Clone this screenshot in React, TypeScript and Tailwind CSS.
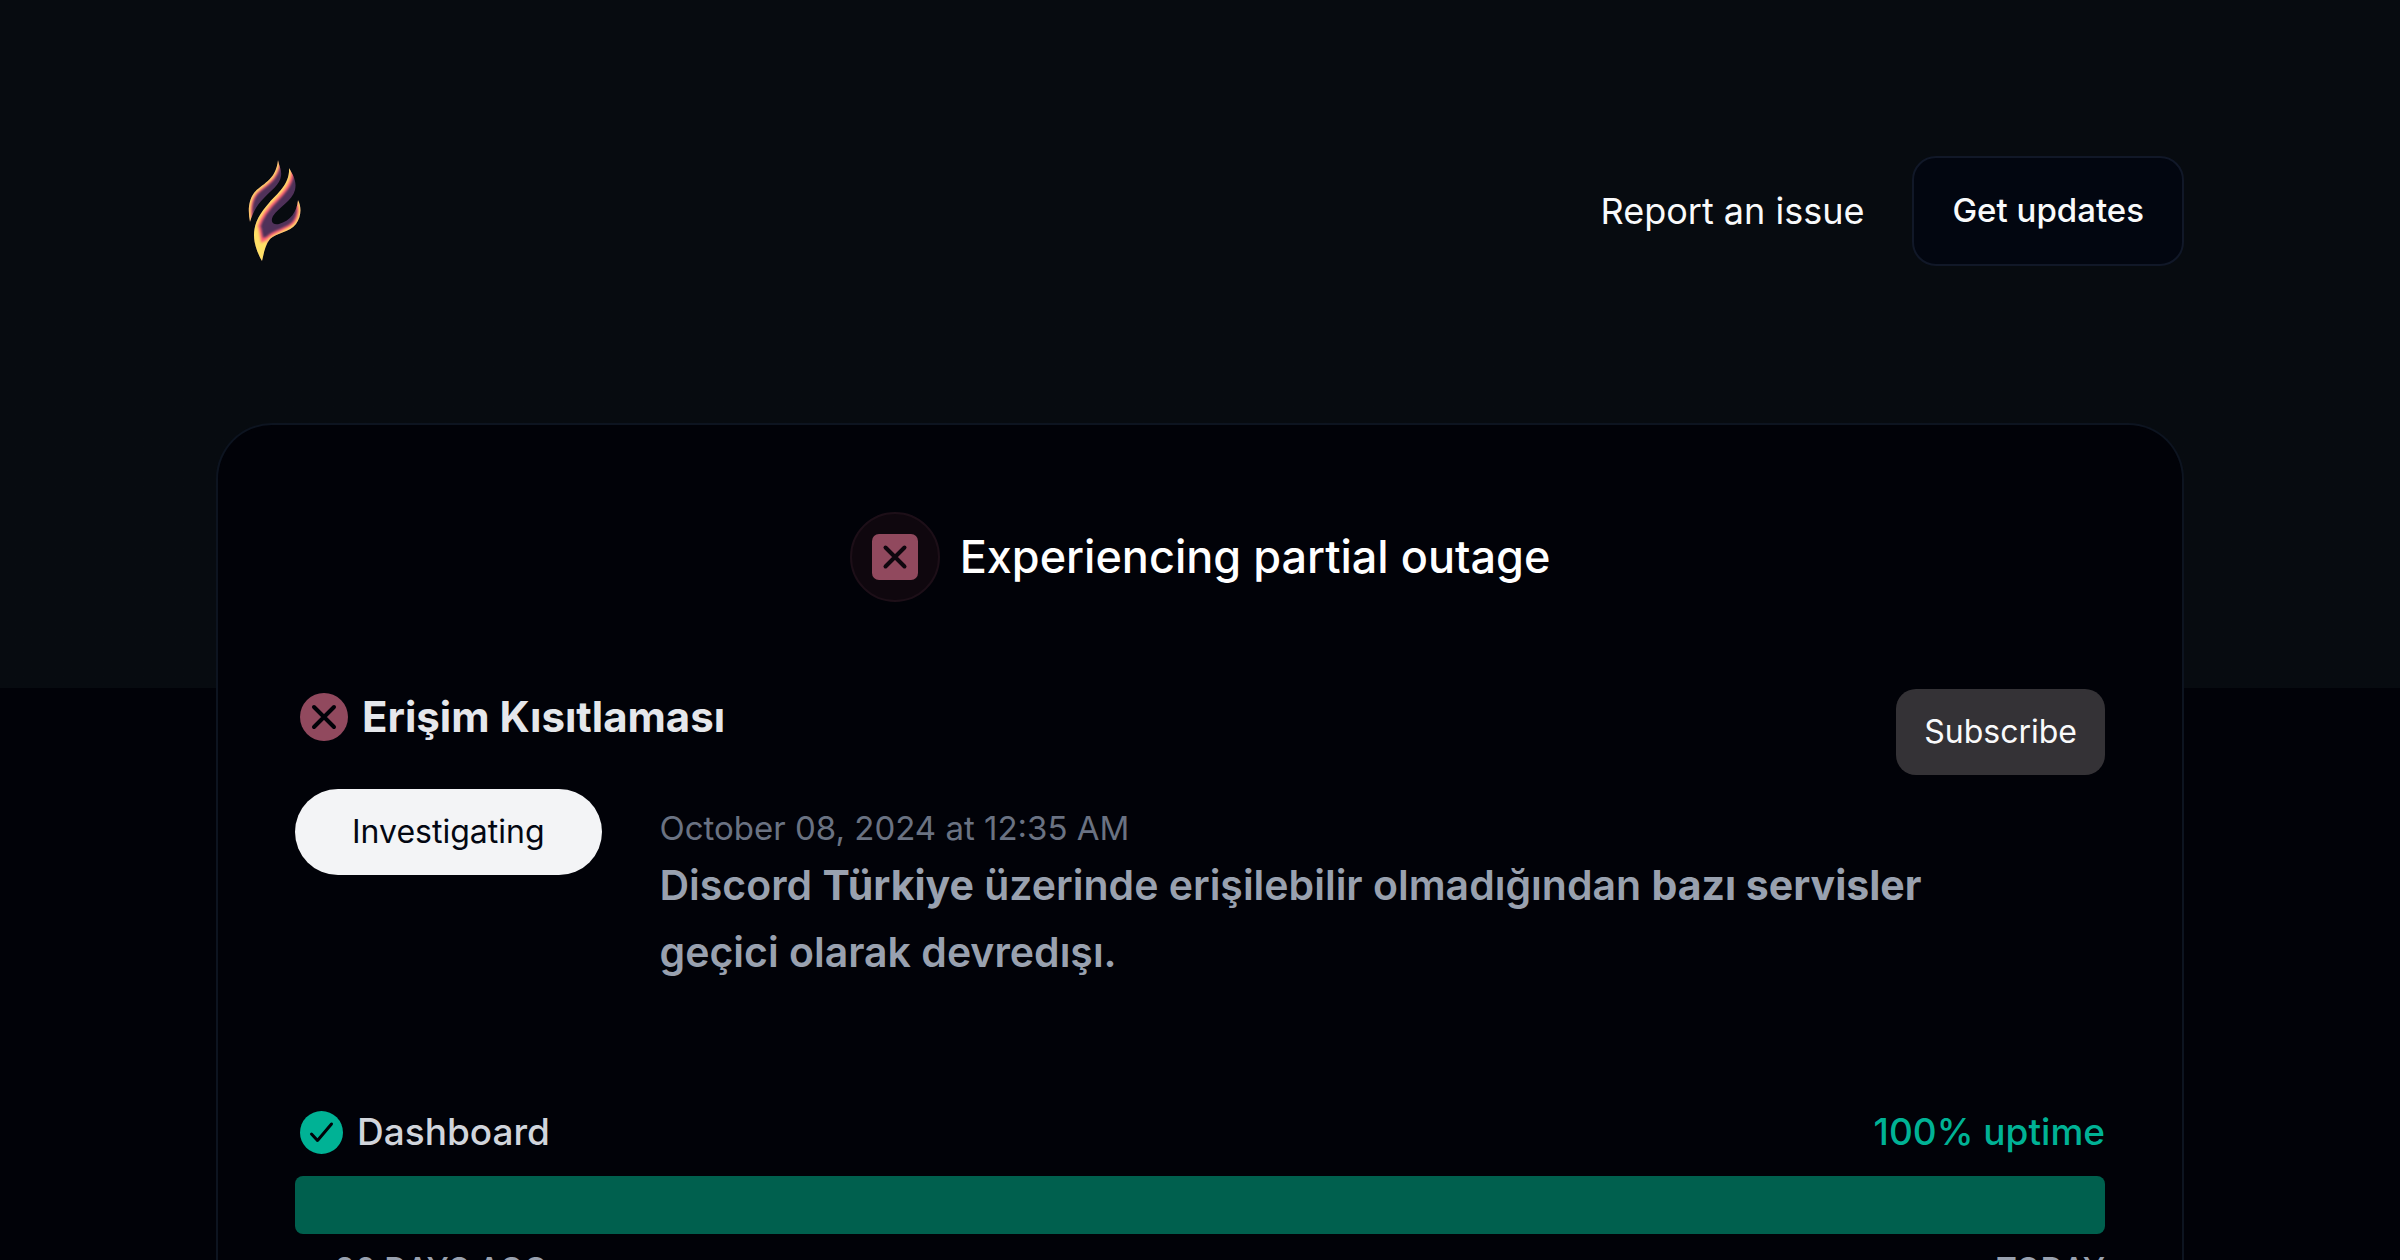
import { useId } from 'react'

function Logo() {
  const id = useId()
  return (
    <svg viewBox="0 1 90 130" className="h-[130px] w-[90px]" aria-label="Logo" role="img">
      <defs>
        <filter id={`${id}-soft`} x="-20%" y="-20%" width="140%" height="140%">
          <feGaussianBlur stdDeviation="0.8" />
        </filter>
        <clipPath id={`${id}-a`}>
          <path d="M48 15C49 21 52 25 51 31C50 40 41 45 34 53C27 60 23 67 20 77C18 67 18 56 24 48C31 39 46 36 48 15Z" />
        </clipPath>
        <clipPath id={`${id}-b`}>
          <path d="M59 23C63 30 67 36 65 45C62 56 49 62 43 71C40 77 43 80 49 79C60 76 67 67 68 55C72 63 71 72 66 79C60 87 46 88 40 94C35 100 34 108 32 116C28 109 24 100 24 90C24 77 31 67 39 58C48 48 60 39 59 23Z" />
        </clipPath>
      </defs>
      <g clipPath={`url(#${id}-a)`}>
        <rect width="90" height="130" fill="#4f3159" />
        <g fill="none" filter={`url(#${id}-soft)`}>
          <path d="M48 15C46 36 31 39 24 48C18 56 18 67 20 77" stroke="#ff6374" strokeWidth="7" />
          <path d="M48 15C46 36 31 39 24 48C18 56 18 67 20 77" stroke="#ffe066" strokeWidth="3" />
        </g>
      </g>
      <g clipPath={`url(#${id}-b)`}>
        <rect width="90" height="130" fill="#4f3159" />
        <g filter={`url(#${id}-soft)`}>
          <path d="M20 82L31 82L33 93L44 89L36 120L20 120Z" fill="#ff6374" />
          <path d="M59 23C60 39 48 48 39 58C31 67 24 77 24 90" fill="none" stroke="#ff6374" strokeWidth="10" />
          <path d="M40 94C46 88 60 87 66 79C71 72 72 63 68 55" fill="none" stroke="#ff6374" strokeWidth="8" />
          <path d="M20 82L28 82L31 98L38 95L36 120L20 120Z" fill="#ffe066" />
          <path d="M59 23C60 39 48 48 39 58C31 67 24 77 24 90" fill="none" stroke="#ffe066" strokeWidth="4" />
          <path d="M38 96C46 88 60 87 66 79C71 72 72 63 68 55" fill="none" stroke="#ffe066" strokeWidth="3" />
        </g>
      </g>
    </svg>
  )
}

function CrossCircle() {
  return (
    <svg viewBox="0 0 48 48" className="size-12 shrink-0" aria-hidden="true">
      <circle cx="24" cy="24" r="24" fill="#91495e" />
      <path d="M14 14L34 34M34 14L14 34" stroke="#010208" strokeWidth="4" strokeLinecap="round" />
    </svg>
  )
}

function CheckCircle() {
  return (
    <svg viewBox="0 0 43 43" className="size-[43px] shrink-0" aria-hidden="true">
      <circle cx="21.5" cy="21.5" r="21.5" fill="#00b295" />
      <path d="M11.5 23L17.5 29.5L31.5 13" fill="none" stroke="#010208" strokeWidth="3" strokeLinecap="round" strokeLinejoin="round" />
    </svg>
  )
}

function CrossBadge() {
  return (
    <div className="flex size-[90px] items-center justify-center rounded-full border-2 border-[#1d0f18] bg-[#0f070e]">
      <svg viewBox="0 0 46 46" className="size-[46px]" aria-hidden="true">
        <rect width="46" height="46" rx="7" fill="#91495e" />
        <path d="M13.5 13.5L32.5 32.5M32.5 13.5L13.5 32.5" stroke="#0f070e" strokeWidth="4" strokeLinecap="round" />
      </svg>
    </div>
  )
}

function Header() {
  return (
    <header className="flex items-center justify-between">
      <a href="#" className="ml-[14px]">
        <Logo />
      </a>
      <nav className="flex items-center gap-12">
        <a href="#report" className="text-[36px] leading-[56px] text-gray-50">Report an issue</a>
        <button className="rounded-3xl border-2 border-[#111828] bg-[#020610] px-[38px] pt-7 pb-[30px] text-[33px] leading-[48px] font-medium text-gray-50">
          Get updates
        </button>
      </nav>
    </header>
  )
}

function Incident() {
  return (
    <section className="mt-[87px]">
      <div className="flex items-start justify-between">
        <h2 className="flex items-center gap-[14px] pl-[5px] text-[42px] leading-[56px] font-bold text-gray-200">
          <CrossCircle />
          Erişim Kısıtlaması
        </h2>
        <button className="rounded-[20px] bg-[#343236] px-7 py-[19px] text-[32px] leading-[48px] text-gray-50">
          Subscribe
        </button>
      </div>
      <div className="mt-[14px] flex items-start gap-[58px]">
        <span className="shrink-0 rounded-full bg-gray-100 px-[57px] py-[19px] text-[32px] leading-[48px] text-gray-950">
          Investigating
        </span>
        <div className="max-w-[1300px] pt-[15px]">
          <time className="block text-[33px] leading-[48px] text-gray-500">October 08, 2024 at 12:35 AM</time>
          <p className="text-[41px] leading-[67px] font-semibold text-gray-400">
            Discord <strong className="font-bold">Türkiye</strong> üzerinde erişilebilir olmadığından{' '}
            <strong className="font-bold">bazı servisler</strong> geçici olarak devredışı.
          </p>
        </div>
      </div>
    </section>
  )
}

function Monitor() {
  return (
    <section className="mt-[118px]">
      <div className="flex items-center justify-between text-[37px] leading-[56px] font-medium">
        <h3 className="flex items-center gap-[14px] pl-[5px] text-gray-300">
          <CheckCircle />
          Dashboard
        </h3>
        <span className="text-[#00b295]">100% uptime</span>
      </div>
      <div className="mt-4 h-[58px] rounded-lg bg-[#00604e]" />
      <div className="mt-3 flex justify-between text-[32px] leading-[48px] font-medium text-gray-400">
        <span className="pl-10">90 DAYS AGO</span>
        <span>TODAY</span>
      </div>
    </section>
  )
}

export default function App() {
  return (
    <div className="h-screen overflow-hidden bg-[#010208] bg-linear-to-b from-[#070b10] from-[688px] to-[#010208] to-[688px] font-['Inter',sans-serif]">
      <div className="mx-[9%] pt-[146px]">
        <Header />
        <main className="mt-[147px] rounded-t-[56px] border-2 border-b-0 border-[#0d1420] bg-[#010208] px-[77px] pt-[87px] pb-20">
          <div className="flex items-center justify-center gap-5">
            <CrossBadge />
            <h1 className="text-[45px] leading-[64px] font-medium text-white">Experiencing partial outage</h1>
          </div>
          <Incident />
          <Monitor />
        </main>
      </div>
    </div>
  )
}
